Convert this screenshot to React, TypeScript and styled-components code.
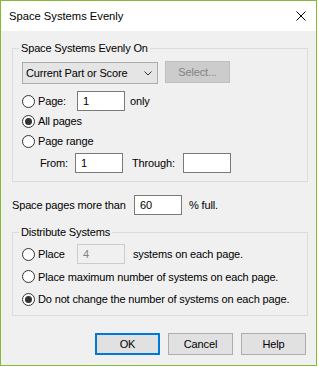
import React from "react";
import styled, { createGlobalStyle } from "styled-components";

const GlobalStyle = createGlobalStyle`
  html, body { margin: 0; padding: 0; background: #ffffff; }
  * { box-sizing: border-box; }
`;

const FONT = `"Liberation Sans", Arial, sans-serif`;

const Window = styled.div`
  width: 317px;
  height: 366px;
  border: 1px solid #86b93a;
  background: #f0f0f0;
  display: flex;
  flex-direction: column;
  font-family: ${FONT};
  font-size: 11px;
  letter-spacing: -0.15px;
  color: #000;
`;

const TitleBar = styled.div`
  height: 30px;
  background: #ffffff;
  display: flex;
  align-items: center;
  justify-content: space-between;
  padding-left: 8px;
  font-size: 11.2px;
  letter-spacing: 0;
  flex: none;
`;

const CloseBox = styled.div`
  width: 30px;
  height: 30px;
  display: flex;
  align-items: center;
  justify-content: center;
`;

const Body = styled.div`
  flex: 1;
  padding: 9px 8px 0 11px;
  display: flex;
  flex-direction: column;
`;

const Group = styled.fieldset<{ $pt: number; $pb: number; $mt?: number }>`
  margin: ${(p) => p.$mt ?? 0}px 0 0 0;
  border: 1px solid #dcdcdc;
  padding: ${(p) => p.$pt}px 8px ${(p) => p.$pb}px 9px;
  min-width: 0;
  display: flex;
  flex-direction: column;
`;

const Legend = styled.legend`
  padding: 0 2px;
  margin-left: -3px;
  line-height: 16px;
  height: 16px;
`;

const Row = styled.div<{ $h: number; $mt?: number; $pl?: number }>`
  display: flex;
  align-items: center;
  height: ${(p) => p.$h}px;
  margin-top: ${(p) => p.$mt ?? 0}px;
  padding-left: ${(p) => p.$pl ?? 0}px;
  white-space: nowrap;
  line-height: 16px;
`;

const Dropdown = styled.div`
  width: 136px;
  height: 22px;
  border: 1px solid #acacac;
  background: #e5e5e5;
  display: flex;
  align-items: center;
  justify-content: space-between;
  padding: 0 5px 0 3px;
`;

const DisabledButton = styled.div`
  margin-left: 7px;
  margin-top: -2px;
  width: 65px;
  height: 22px;
  border: 1px solid #bfbfbf;
  background: #cccccc;
  color: #838383;
  display: flex;
  align-items: center;
  justify-content: center;
`;

const RadioLabel = styled.label<{ $w?: number }>`
  display: flex;
  align-items: center;
  gap: 3px;
  width: ${(p) => (p.$w ? `${p.$w}px` : "auto")};
  flex: none;
`;

const RadioCircle = styled.span<{ $checked?: boolean }>`
  width: 13px;
  height: 13px;
  border-radius: 50%;
  border: 1px solid #333333;
  background: #ffffff;
  display: flex;
  align-items: center;
  justify-content: center;
  flex: none;
  &::after {
    content: "";
    width: 7px;
    height: 7px;
    border-radius: 50%;
    background: #333333;
    display: ${(p) => (p.$checked ? "block" : "none")};
  }
`;

const TextBox = styled.div<{ $disabled?: boolean }>`
  width: 48px;
  height: 20px;
  border: 1px solid ${(p) => (p.$disabled ? "#cccccc" : "#7a7a7a")};
  background: ${(p) => (p.$disabled ? "#f0f0f0" : "#ffffff")};
  color: ${(p) => (p.$disabled ? "#838383" : "#000000")};
  padding-left: 5px;
  display: flex;
  align-items: center;
  flex: none;
`;

const Text = styled.span<{ $ml?: number; $w?: number }>`
  margin-left: ${(p) => p.$ml ?? 0}px;
  width: ${(p) => (p.$w ? `${p.$w}px` : "auto")};
  flex: none;
`;

const Footer = styled.div`
  display: flex;
  justify-content: flex-end;
  gap: 8px;
  margin-top: 17px;
  padding-right: 2px;
`;

const Button = styled.div<{ $default?: boolean }>`
  width: 65px;
  height: 22px;
  border: ${(p) => (p.$default ? "2px solid #0078d7" : "1px solid #adadad")};
  background: #e1e1e1;
  display: flex;
  align-items: center;
  justify-content: center;
`;

const Radio = ({ checked, label, w }: { checked?: boolean; label: string; w?: number }) => (
  <RadioLabel $w={w}>
    <RadioCircle $checked={checked} />
    <span>{label}</span>
  </RadioLabel>
);

export default function App() {
  return (
    <>
      <GlobalStyle />
      <Window>
        <TitleBar>
          <span>Space Systems Evenly</span>
          <CloseBox>
            <svg width="10" height="10" viewBox="0 0 10 10">
              <path d="M0.5 0.5 L9.5 9.5 M9.5 0.5 L0.5 9.5" stroke="#000" strokeWidth="1" />
            </svg>
          </CloseBox>
        </TitleBar>
        <Body>
          <Group $pt={6} $pb={8}>
            <Legend>Space Systems Evenly On</Legend>
            <Row $h={22}>
              <Dropdown>
                <span>Current Part or Score</span>
                <svg width="8" height="5" viewBox="0 0 8 5">
                  <path d="M0.5 0.5 L4 4 L7.5 0.5" fill="none" stroke="#333" strokeWidth="1" />
                </svg>
              </Dropdown>
              <DisabledButton>Select...</DisabledButton>
            </Row>
            <Row $h={20} $mt={7}>
              <Radio label="Page:" w={55} />
              <TextBox>1</TextBox>
              <Text $ml={5}>only</Text>
            </Row>
            <Row $h={20}>
              <Radio checked label="All pages" />
            </Row>
            <Row $h={20}>
              <Radio label="Page range" />
            </Row>
            <Row $h={20} $mt={2} $pl={18}>
              <Text $w={35}>From:</Text>
              <TextBox>1</TextBox>
              <Text $ml={9} $w={51}>Through:</Text>
              <TextBox />
            </Row>
          </Group>
          <Row $h={20} $mt={13}>
            <Text $w={122}>Space pages more than</Text>
            <TextBox>60</TextBox>
            <Text $ml={7}>% full.</Text>
          </Row>
          <Group $pt={4} $pb={5} $mt={9}>
            <Legend>Distribute Systems</Legend>
            <Row $h={20}>
              <Radio label="Place" w={55} />
              <TextBox $disabled>4</TextBox>
              <Text $ml={8}>systems on each page.</Text>
            </Row>
            <Row $h={23} $mt={1}>
              <Radio label="Place maximum number of systems on each page." />
            </Row>
            <Row $h={22}>
              <Radio checked label="Do not change the number of systems on each page." />
            </Row>
          </Group>
          <Footer>
            <Button $default>OK</Button>
            <Button>Cancel</Button>
            <Button>Help</Button>
          </Footer>
        </Body>
      </Window>
    </>
  );
}
